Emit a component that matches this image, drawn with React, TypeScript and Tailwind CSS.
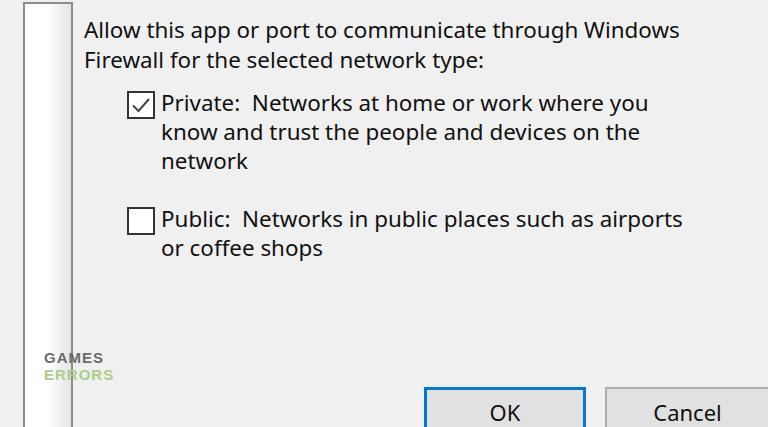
const font = { fontFamily: '"Segoe UI", "Noto Sans", "Open Sans", sans-serif' };

function Box({ checked }: { checked?: boolean }) {
  return (
    <div className="mt-[3px] flex h-[28px] w-[28px] shrink-0 items-center justify-center border-2 border-[#333] bg-white">
      {checked && (
        <svg width="22" height="22" viewBox="0 0 22 22" fill="none">
          <path d="M3 11.5l5.5 5.5L19 5" stroke="#444" strokeWidth="2" />
        </svg>
      )}
    </div>
  );
}

function Option({ checked, lines }: { checked?: boolean; lines: string[] }) {
  return (
    <div className="flex gap-[6px]">
      <Box checked={checked} />
      <div className="leading-[29px]">
        {lines.map((l) => (
          <div key={l} className="whitespace-pre">
            {l}
          </div>
        ))}
      </div>
    </div>
  );
}

export default function App() {
  return (
    <div
      className="relative flex h-[427px] w-[768px] overflow-hidden bg-[#f0f0f0] text-[22.4px] text-[#111]"
      style={font}
    >
      {/* left list panel */}
      <div className="ml-[23px] mt-[2px] h-[440px] w-[50px] shrink-0 border-2 border-[#8c8c8c] bg-gradient-to-r from-white via-white to-[#e4e4e4]" />

      <div className="ml-[11px] flex flex-1 flex-col">
        <div className="mt-[15px] leading-[30px]">
          <div>Allow this app or port to communicate through Windows</div>
          <div>Firewall for the selected network type:</div>
        </div>

        <div className="ml-[43px] mt-[13px] flex flex-col gap-[29px]">
          <Option
            checked
            lines={[
              "Private:  Networks at home or work where you",
              "know and trust the people and devices on the",
              "network",
            ]}
          />
          <Option
            lines={["Public:  Networks in public places such as airports", "or coffee shops"]}
          />
        </div>

        <div className="mt-auto flex justify-end gap-[19px]">
          <button className="mb-[-20px] h-[60px] w-[162px] border-[3px] border-[#0078d7] bg-[#e1e1e1] pb-[9px] text-[22px]">
            OK
          </button>
          <button className="mb-[-20px] mr-[-2px] h-[60px] w-[165px] border-2 border-[#adadad] bg-[#e1e1e1] pb-[9px] text-[22px]">
            Cancel
          </button>
        </div>
      </div>

      {/* watermark */}
      <div
        className="absolute left-[44px] top-[349px] text-[15px] font-bold leading-[17px] tracking-[1px]"
        style={{ fontFamily: '"Liberation Sans", Arial, sans-serif' }}
      >
        <div className="text-[#6b6b6b]">GAMES</div>
        <div className="text-[#a9cf8a]">ERRORS</div>
      </div>
    </div>
  );
}
